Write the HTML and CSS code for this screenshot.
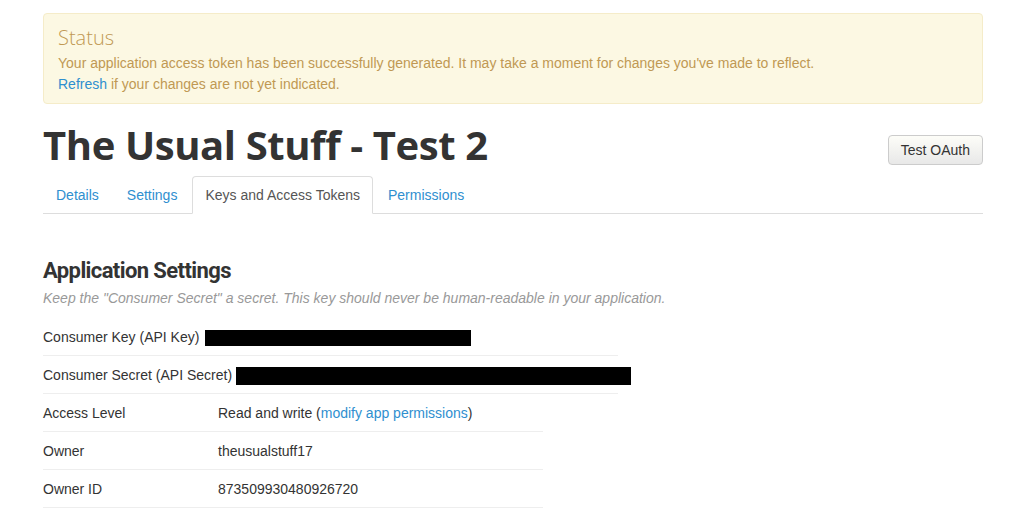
FILE: index.html
```html
<!DOCTYPE html>
<html lang="en">
<head>
    <meta charset="UTF-8">
    <meta name="viewport" content="width=device-width, initial-scale=1.0">
    <title>The Usual Stuff - Test 2</title>
    <link rel="stylesheet" href="styles.css">
</head>
<body>
    <div class="container">
        <div class="alert">
            <h3 class="alert-title">Status</h3>
            <p>Your application access token has been successfully generated. It may take a moment for changes you've made to reflect.</p>
            <p><a href="#">Refresh</a> if your changes are not yet indicated.</p>
        </div>

        <div class="app-header">
            <h1>The Usual Stuff - Test 2</h1>
            <button class="btn">Test OAuth</button>
        </div>

        <ul class="tabs">
            <li><a href="#">Details</a></li>
            <li><a href="#">Settings</a></li>
            <li class="active"><a href="#">Keys and Access Tokens</a></li>
            <li><a href="#">Permissions</a></li>
        </ul>

        <div class="section">
            <h2>Application Settings</h2>
            <p class="hint">Keep the "Consumer Secret" a secret. This key should never be human-readable in your application.</p>

            <div class="keys">
                <div class="row">Consumer Key (API Key) <span class="redacted key"></span></div>
                <div class="row">Consumer Secret (API Secret) <span class="redacted secret"></span></div>
            </div>

            <div class="details">
                <div class="row">
                    <span class="label">Access Level</span>
                    <span class="value">Read and write (<a href="#">modify app permissions</a>)</span>
                </div>
                <div class="row">
                    <span class="label">Owner</span>
                    <span class="value">theusualstuff17</span>
                </div>
                <div class="row">
                    <span class="label">Owner ID</span>
                    <span class="value">873509930480926720</span>
                </div>
            </div>
        </div>
    </div>
</body>
</html>
```

FILE: styles.css
```css
* {
    margin: 0;
    padding: 0;
    box-sizing: border-box;
}

body {
    font-family: 'Liberation Sans', Arial, sans-serif;
    font-size: 14px;
    line-height: 20px;
    color: #333;
    background: #fff;
}

a {
    color: #2f8fcf;
    text-decoration: none;
}

.container {
    width: 940px;
    margin-left: 43px;
    padding-top: 13px;
}

.alert {
    background: #fcf8e3;
    border: 1px solid #f5ecc9;
    border-radius: 4px;
    padding: 11px 14px 10px;
    color: #c09853;
    height: 91px;
}

.alert-title {
    font-family: 'Open Sans', sans-serif;
    font-weight: 300;
    font-size: 20px;
    line-height: 26px;
    margin-bottom: 2px;
}

.alert p {
    line-height: 21px;
}

.app-header {
    display: flex;
    justify-content: space-between;
    align-items: flex-start;
    margin-top: 17px;
}

h1 {
    font-family: 'Open Sans', sans-serif;
    font-weight: 700;
    font-size: 40px;
    line-height: 48px;
    color: #333;
    letter-spacing: -0.4px;
}

.btn {
    margin-top: 14px;
    font-family: 'Liberation Sans', Arial, sans-serif;
    font-size: 14px;
    color: #333;
    padding: 5px 12px;
    height: 30px;
    border: 1px solid #ccc;
    border-radius: 4px;
    background: linear-gradient(#fdfdf8, #e8e8e8);
    cursor: pointer;
}

.tabs {
    list-style: none;
    display: flex;
    border-bottom: 1px solid #ddd;
    margin-top: 7px;
}

.tabs li {
    margin-right: 2px;
    margin-bottom: -1px;
}

.tabs a {
    display: block;
    padding: 8px 12px;
    line-height: 20px;
    border: 1px solid transparent;
    border-radius: 4px 4px 0 0;
}

.tabs .active a {
    color: #555;
    background: #fff;
    border-color: #ddd;
    border-bottom-color: #fff;
}

.section {
    padding-top: 44px;
}

h2 {
    font-family: 'Roboto', sans-serif;
    font-weight: 700;
    font-size: 22px;
    line-height: 26px;
    letter-spacing: -0.6px;
    color: #333;
}

.hint {
    font-style: italic;
    font-size: 14px;
    color: #999;
    margin-top: 4px;
}

.row {
    padding: 9px 0 8px;
    border-bottom: 1px solid #eee;
    line-height: 20px;
    white-space: nowrap;
}

.keys {
    width: 575px;
    margin-top: 10px;
}

.redacted {
    display: inline-block;
    vertical-align: middle;
    background: #000;
}

.redacted.key {
    width: 266px;
    height: 16px;
    margin-left: 2px;
}

.redacted.secret {
    width: 395px;
    height: 18px;
}

.details {
    width: 500px;
}

.details .row {
    display: flex;
}

.label {
    width: 175px;
}
```
